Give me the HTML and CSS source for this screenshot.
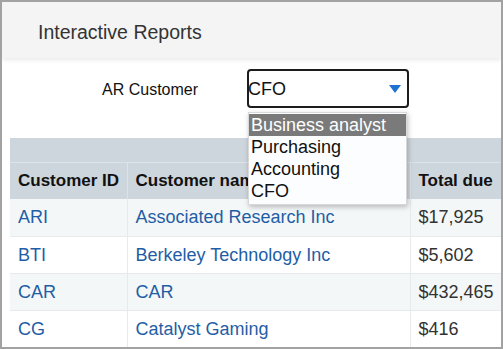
FILE: index.html
```html
<!DOCTYPE html>
<html>
<head>
<meta charset="utf-8">
<link rel="stylesheet" href="styles.css">
</head>
<body>
<div class="frame">
  <div class="header"><span class="title">Interactive Reports</span></div>
  <div class="form-row">
    <label class="label">AR Customer</label>
    <div class="select-wrap">
      <div class="select">
        <span class="select-value">CFO</span>
        <svg class="caret" width="12" height="8" viewBox="0 0 12 8"><polygon points="0,0 12,0 6,8" fill="#1f72d3"/></svg>
      </div>
      <ul class="options">
        <li class="option active">Business analyst</li>
        <li class="option">Purchasing</li>
        <li class="option">Accounting</li>
        <li class="option">CFO</li>
      </ul>
    </div>
  </div>
  <table class="report">
    <colgroup><col class="c1"><col class="c2"><col class="c3"></colgroup>
    <thead>
      <tr class="band"><th colspan="3"></th></tr>
      <tr class="heads"><th>Customer ID</th><th>Customer name</th><th>Total due</th></tr>
    </thead>
    <tbody>
      <tr class="odd"><td class="link">ARI</td><td class="link">Associated Research Inc</td><td>$17,925</td></tr>
      <tr><td class="link">BTI</td><td class="link">Berkeley Technology Inc</td><td>$5,602</td></tr>
      <tr class="odd"><td class="link">CAR</td><td class="link">CAR</td><td>$432,465</td></tr>
      <tr><td class="link">CG</td><td class="link">Catalyst Gaming</td><td>$416</td></tr>
    </tbody>
  </table>
</div>
</body>
</html>
```
FILE: styles.css
```css
* { box-sizing: border-box; }
html, body { margin: 0; padding: 0; background: #fff; }
body { font-family: "Liberation Sans", Arial, sans-serif; }
.frame {
  width: 503px;
  height: 349px;
  border: 2px solid #a2a2a2;
  overflow: hidden;
  position: relative;
  background: #fff;
}
.header {
  height: 56px;
  background: #f4f4f4;
  display: flex;
  align-items: center;
  padding-left: 36px;
  box-shadow: 0 2px 5px rgba(0,0,0,0.09);
  position: relative;
  z-index: 1;
}
.title {
  font-size: 19.5px;
  color: #333;
  padding-top: 4px;
}
.form-row {
  display: flex;
  align-items: center;
  padding-left: 100px;
  margin-top: 11px;
  height: 39px;
}
.label {
  font-size: 16px;
  color: #111;
  width: 145px;
  padding-top: 2px;
}
.select-wrap { position: relative; }
.select {
  width: 162px;
  height: 39px;
  border: 2px solid #1c1c1c;
  border-radius: 4px;
  display: flex;
  align-items: center;
  justify-content: space-between;
  padding: 0 6px 0 0;
  font-size: 18px;
  color: #111;
  background: #fff;
}
.select-value { margin-left: -1px; padding-top: 1px; }
.caret { margin-top: 1px; }
.options {
  position: absolute;
  left: 1px;
  top: 43px;
  width: 159px;
  margin: 0;
  padding: 1px 0 2px;
  list-style: none;
  background: #fcfdff;
  border: 1px solid #d8d8d8;
  box-shadow: 1px 2px 5px rgba(0,0,0,0.25);
  z-index: 5;
}
.option {
  font-size: 18px;
  line-height: 22px;
  height: 22px;
  padding-left: 2px;
  color: #111;
}
.option.active { background: #7a7a7a; color: #fff; }
.report {
  margin-left: 8px;
  margin-top: 30px;
  width: 491px;
  border-collapse: collapse;
  table-layout: fixed;
}
.c1 { width: 117px; }
.c2 { width: 283px; }
.c3 { width: 91px; }
.band th {
  height: 24px;
  background: #cdd6dc;
  border-bottom: 1px solid #dce2e6;
  padding: 0;
}
.heads th {
  height: 37px;
  background: #cdd6dc;
  text-align: left;
  font-size: 17px;
  font-weight: bold;
  color: #111;
  padding: 0 8px;
  border-left: 1px solid #dce2e6;
  white-space: nowrap;
  overflow: hidden;
}
.heads th:first-child { border-left: none; }
.report td {
  height: 37px;
  font-size: 18px;
  color: #333;
  padding: 1px 8px 0;
  border-left: 1px solid #e6eaec;
  border-bottom: 1px solid #e6eaec;
  white-space: nowrap;
  overflow: hidden;
}
.report td:first-child { border-left: none; }
.report tr.odd td { background: #f4f7f8; }
.report td.link { color: #1f5ea6; }
```
